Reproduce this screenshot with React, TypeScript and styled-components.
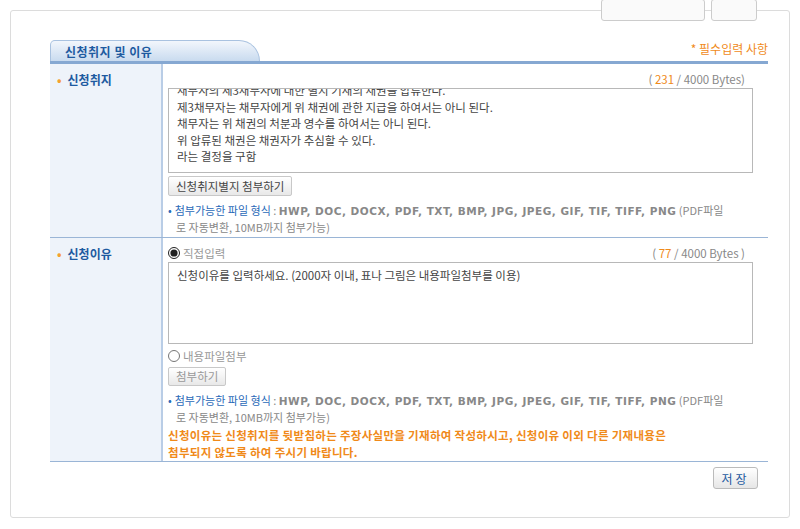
import React, { useEffect, useRef } from "react";
import styled, { createGlobalStyle } from "styled-components";

const up = "data:image/svg+xml;utf8," + encodeURIComponent('<svg xmlns="http://www.w3.org/2000/svg" width="17" height="17"><path d="M4 11 L8.5 6.5 L13 11" fill="none" stroke="#505050" stroke-width="2"/></svg>');
const down = "data:image/svg+xml;utf8," + encodeURIComponent('<svg xmlns="http://www.w3.org/2000/svg" width="17" height="17"><path d="M4 6 L8.5 10.5 L13 6" fill="none" stroke="#505050" stroke-width="2"/></svg>');
const upL = "data:image/svg+xml;utf8," + encodeURIComponent('<svg xmlns="http://www.w3.org/2000/svg" width="17" height="17"><path d="M4 11 L8.5 6.5 L13 11" fill="none" stroke="#c8c8c8" stroke-width="2"/></svg>');
const downL = "data:image/svg+xml;utf8," + encodeURIComponent('<svg xmlns="http://www.w3.org/2000/svg" width="17" height="17"><path d="M4 6 L8.5 10.5 L13 6" fill="none" stroke="#c8c8c8" stroke-width="2"/></svg>');

const Global = createGlobalStyle`
  html, body { margin: 0; padding: 0; background: #fff; }
  body { font-family: "Noto Sans CJK KR", "Noto Sans", sans-serif; font-size: 12px; color: #555; }
`;

const Frame = styled.div`
  position: relative;
  margin: 10px 10px 0 10px;
  height: 508px;
  border: 1px solid #dcdcdc;
  border-radius: 3px;
  box-sizing: border-box;
  padding: 0 21px 0 39px;
`;
const TopBtns = styled.div`
  position: absolute; top: -12px; right: 32px; display: flex; gap: 6px;
`;
const TopBtn = styled.div<{ w: number }>`
  width: ${p => p.w}px; height: 20px; border: 1px solid #ccc; border-radius: 3px; background: #fafafa;
`;
const Header = styled.div`
  margin-top: 29px; display: flex; justify-content: space-between; align-items: flex-end;
  border-bottom: 3px solid #86a8d2;
`;
const Tab = styled.div`
  width: 210px; height: 21px; box-sizing: border-box; padding: 2px 0 0 14px;
  background: linear-gradient(#f2f6fc, #c9dbef);
  border: 1px solid #a9c2e0; border-bottom: none;
  border-radius: 8px 34px 0 0;
  color: #1d5aa0; font-weight: bold; font-size: 12px; letter-spacing: 0.5px;
`;
const Required = styled.div`
  color: #f08a1a; font-size: 12px; padding-bottom: 4px;
`;
const Row = styled.div<{ h: number }>`
  display: flex; height: ${p => p.h}px; border-bottom: 1px solid #9ab5d6; box-sizing: border-box;
`;
const Label = styled.div`
  width: 113px; flex: none; background: #eef3fa; border-right: 2px solid #b9cde6;
  padding: 7px 0 0 7px; box-sizing: border-box; color: #1d5aa0; font-weight: bold; font-size: 12px;
  &::before { content: "•"; color: #f5a030; margin-right: 6px; }
`;
const Body = styled.div`
  flex: 1; padding: 6px 15px 0 5px; display: flex; flex-direction: column;
`;
const TopLine = styled.div`
  display: flex; justify-content: space-between; align-items: center; height: 18px; color: #999; font-size: 11.5px;
`;
const Count = styled.div`
  color: #888; padding-right: 8px; margin-left: auto; b { color: #f08a1a; font-weight: normal; }
`;
const Area = styled.textarea<{ h: number; light?: boolean }>`
  width: 100%; height: ${p => p.h}px; box-sizing: border-box; resize: none;
  border: 1px solid #b8b8b8; padding: 2px 8px; font-family: inherit; font-size: 11.5px;
  line-height: 16.6px; color: #444; margin: 0; outline: none; overflow-y: scroll;
  &::-webkit-scrollbar { width: 17px; background: #f1f1f1; }
  &::-webkit-scrollbar-thumb { background: ${p => (p.light ? "transparent" : "#c1c1c1")}; border: 2px solid #f1f1f1; }
  &::-webkit-scrollbar-button:single-button { height: 17px; display: block; background-color: #f1f1f1; }
  &::-webkit-scrollbar-button:single-button:vertical:decrement { background-image: url('${p => (p.light ? upL : up)}'); }
  &::-webkit-scrollbar-button:single-button:vertical:increment { background-image: url('${p => (p.light ? downL : down)}'); }
`;
const Btn = styled.button`
  align-self: flex-start; height: 20px; padding: 0 7px; border: 1px solid #c8c8c8; border-radius: 2px;
  background: linear-gradient(#fff, #e8e8e8); font-family: inherit; font-size: 11.5px; color: #444; margin-top: 3px;
`;
const Info = styled.div`
  margin-top: 6px; font-size: 11px; line-height: 16px; color: #888;
  span.k { color: #2a6ab8; }
  span.k::before { content: "•"; margin-right: 3px; }
  b { font-family: "DejaVu Sans", sans-serif; font-size: 10.5px; color: #888; letter-spacing: 0.5px; }
  div { padding-left: 8px; }
`;
const Radio = styled.label`
  display: flex; align-items: center; gap: 3px; color: #999; font-size: 11.5px;
  input { margin: 0; width: 12px; height: 12px; accent-color: #222; }
`;
const Warn = styled.div`
  color: #f08a1a; font-weight: bold; font-size: 11.5px; line-height: 17px; margin-top: 2px; letter-spacing: 0.3px;
`;
const Footer = styled.div`
  display: flex; justify-content: flex-end; padding: 5px 10px 0 0;
`;
const Save = styled.button`
  width: 45px; height: 22px; border: 1px solid #bbb; border-radius: 3px; background: linear-gradient(#fff, #e6e6e6);
  color: #1d5aa0; font-family: inherit; font-size: 12px; letter-spacing: 3px;
`;

const text1 = "채무자의 제3채무자에 대한 별지 기재의 채권을 압류한다.\n제3채무자는 채무자에게 위 채권에 관한 지급을 하여서는 아니 된다.\n채무자는 위 채권의 처분과 영수를 하여서는 아니 된다.\n위 압류된 채권은 채권자가 추심할 수 있다.\n라는 결정을 구함\n\n\n\n\n";

const InfoBlock = () => (
  <Info>
    <span className="k">첨부가능한 파일 형식</span> : <b>HWP, DOC, DOCX, PDF, TXT, BMP, JPG, JPEG, GIF, TIF, TIFF, PNG</b> (PDF파일
    <div>로 자동변환, 10MB까지 첨부가능)</div>
  </Info>
);

export default function App() {
  const ref = useRef<HTMLTextAreaElement>(null);
  useEffect(() => { if (ref.current) ref.current.scrollTop = 9; }, []);
  return (
    <>
      <Global />
      <Frame>
        <TopBtns><TopBtn w={102} /><TopBtn w={44} /></TopBtns>
        <Header>
          <Tab>신청취지 및 이유</Tab>
          <Required>* 필수입력 사항</Required>
        </Header>
        <Row h={174}>
          <Label>신청취지</Label>
          <Body>
            <TopLine><Count>( <b>231</b> / 4000 Bytes)</Count></TopLine>
            <Area h={85} ref={ref} defaultValue={text1} />
            <Btn>신청취지별지 첨부하기</Btn>
            <InfoBlock />
          </Body>
        </Row>
        <Row h={224}>
          <Label>신청이유</Label>
          <Body>
            <TopLine>
              <Radio><input type="radio" name="r" defaultChecked />직접입력</Radio>
              <Count>( <b>77</b> / 4000 Bytes )</Count>
            </TopLine>
            <Area h={84} light style={{ marginTop: 1, paddingTop: 4 }} defaultValue="신청이유를 입력하세요. (2000자 이내, 표나 그림은 내용파일첨부를 이용)" />
            <Radio style={{ marginTop: 4 }}><input type="radio" name="r" /> 내용파일첨부</Radio>
            <Btn style={{ color: "#999" }}>첨부하기</Btn>
            <InfoBlock />
            <Warn>신청이유는 신청취지를 뒷받침하는 주장사실만을 기재하여 작성하시고, 신청이유 이외 다른 기재내용은<br />첨부되지 않도록 하여 주시기 바랍니다.</Warn>
          </Body>
        </Row>
        <Footer><Save>저장</Save></Footer>
      </Frame>
    </>
  );
}
